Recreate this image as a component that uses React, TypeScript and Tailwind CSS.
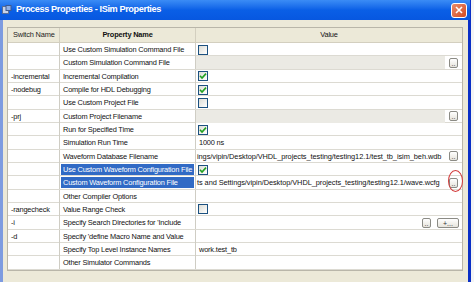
import React from "react";

type Row = {
  sw: string;
  name: string;
  kind: "check" | "checked" | "file" | "text" | "empty" | "path" | "dirs";
  value?: string;
  hl?: boolean;
  circle?: boolean;
};

const ROWS: Row[] = [
  { sw: "", name: "Use Custom Simulation Command File", kind: "check" },
  { sw: "", name: "Custom Simulation Command File", kind: "file" },
  { sw: "-incremental", name: "Incremental Compilation", kind: "checked" },
  { sw: "-nodebug", name: "Compile for HDL Debugging", kind: "checked" },
  { sw: "", name: "Use Custom Project File", kind: "check" },
  { sw: "-prj", name: "Custom Project Filename", kind: "file" },
  { sw: "", name: "Run for Specified Time", kind: "checked" },
  { sw: "", name: "Simulation Run Time", kind: "text", value: "1000 ns" },
  {
    sw: "",
    name: "Waveform Database Filename",
    kind: "path",
    value: "ings/vipin/Desktop/VHDL_projects_testing/testing12.1/test_tb_isim_beh.wdb",
  },
  { sw: "", name: "Use Custom Waveform Configuration File", kind: "checked", hl: true },
  {
    sw: "",
    name: "Custom Waveform Configuration File",
    kind: "path",
    value: "ts and Settings/vipin/Desktop/VHDL_projects_testing/testing12.1/wave.wcfg",
    hl: true,
    circle: true,
  },
  { sw: "", name: "Other Compiler Options", kind: "empty" },
  { sw: "-rangecheck", name: "Value Range Check", kind: "check" },
  { sw: "-i", name: "Specify Search Directories for 'Include", kind: "dirs" },
  { sw: "-d", name: "Specify 'define Macro Name and Value", kind: "empty" },
  { sw: "", name: "Specify Top Level Instance Names", kind: "text", value: "work.test_tb" },
  { sw: "", name: "Other Simulator Commands", kind: "empty" },
];

function Checkbox({ checked }: { checked: boolean }) {
  return (
    <div className="w-[10px] h-[10px] border border-[#1c5180] bg-gradient-to-br from-[#dcdcd5] to-white flex items-center justify-center">
      {checked && (
        <svg width="8" height="8" viewBox="0 0 8 8">
          <path d="M1 3.8 L3 6 L7 1.6" stroke="#21a121" strokeWidth="1.6" fill="none" />
        </svg>
      )}
    </div>
  );
}

function DotsButton({ label = "..", wide = false }: { label?: string; wide?: boolean }) {
  return (
    <div
      className={`h-[10px] ${wide ? "w-[22px]" : "w-[9px]"} border border-[#8b8b85] rounded-[2px] bg-gradient-to-b from-white to-[#e6e4dc] flex items-end justify-center text-[7px] leading-[7px] tracking-normal text-[#333]`}
    >
      {label}
    </div>
  );
}

function ValueCell({ row }: { row: Row }) {
  switch (row.kind) {
    case "check":
    case "checked":
      return (
        <div className="h-full flex items-center pl-[2px]">
          <Checkbox checked={row.kind === "checked"} />
        </div>
      );
    case "file":
      return (
        <div className="h-full flex">
          <div className="flex-1 bg-[#ebeae4]" />
          <div className="w-[17px] flex items-center justify-center">
            <DotsButton />
          </div>
        </div>
      );
    case "text":
      return <div className="h-full flex items-center pl-[3px]">{row.value}</div>;
    case "path":
      return (
        <div className="h-full flex relative">
          <div className="flex-1 min-w-0 flex overflow-hidden whitespace-nowrap items-center pl-[1px] tracking-[-0.07px]">
            {row.value}
          </div>
          <div className="w-[17px] shrink-0 flex items-center justify-center">
            <DotsButton />
          </div>
          {row.circle && (
            <div className="absolute right-[-1px] top-[-6px] w-[15px] h-[22px] rounded-[50%] border border-[#d23a3a]" />
          )}
        </div>
      );
    case "dirs":
      return (
        <div className="h-full flex items-center justify-end gap-[6px] pr-[3px]">
          <DotsButton />
          <DotsButton label="+..." wide />
        </div>
      );
    default:
      return null;
  }
}

export default function App() {
  return (
    <div
      className="w-[474px] h-[282px] bg-white overflow-hidden flex"
      style={{ fontFamily: "'Liberation Sans', Arial, sans-serif" }}
    >
      <div className="w-[471px] h-full flex flex-col border-l-[3px] border-r-[3px] border-l-[#7d9be0] border-r-[#0a2fc6]">
        {/* Title bar */}
        <div className="h-[20px] shrink-0 bg-gradient-to-b from-[#3b8cf5] via-[#0a5fe6] to-[#0757e0] flex items-center -ml-[3px] -mr-[2px] pl-[2px] pr-[3px]">
          <svg width="10" height="10" viewBox="0 0 10 10" className="shrink-0">
            <rect x="0.5" y="1.5" width="6" height="7" fill="#c8d4ea" stroke="#5a6f98" />
            <rect x="4" y="0.5" width="5" height="5" fill="#8fb0e8" stroke="#3e5a90" />
          </svg>
          <span className="ml-[4px] text-white font-bold text-[9.2px] tracking-[-0.4px]">
            Process Properties - ISim Properties
          </span>
          <div className="ml-auto w-[16px] h-[15px] rounded-[3px] border border-white bg-gradient-to-br from-[#e98a6a] to-[#d24b1d] flex items-center justify-center">
            <svg width="8" height="8" viewBox="0 0 8 8">
              <path d="M1 1 L7 7 M7 1 L1 7" stroke="white" strokeWidth="1.6" />
            </svg>
          </div>
        </div>

        {/* Body */}
        <div className="flex-1 bg-[#ece9d8] pt-[7px] pl-[4px] pr-[4px]">
          <div className="w-[456px] border border-[#b9b6a9] bg-white text-[7.4px] tracking-[-0.18px] text-[#111]">
            {/* Header */}
            <div className="grid grid-cols-[52px_136px_minmax(0,1fr)] h-[15px] bg-[#ece9d8] border-b border-[#d3cfbf] whitespace-nowrap">
              <div className="flex items-center pl-[5px] border-r border-[#d3cfbf] text-[#222]">Switch Name</div>
              <div className="flex items-center justify-center border-r border-[#d3cfbf] font-bold">Property Name</div>
              <div className="flex items-center justify-center">Value</div>
            </div>
            {ROWS.map((row, i) => (
              <div
                key={i}
                className="grid grid-cols-[52px_136px_minmax(0,1fr)] h-[13.33px] border-b border-[#dcdad2]"
              >
                <div className="flex items-center pl-[3px] border-r border-[#cfcdc4] whitespace-nowrap">{row.sw}</div>
                <div className="border-r border-[#cfcdc4] px-[1px] py-[1px] min-w-0">
                  <div
                    className={`h-full flex items-center pl-[2px] whitespace-nowrap overflow-hidden ${row.hl ? "bg-[#316ac5] text-white" : ""}`}
                  >
                    {row.name}
                  </div>
                </div>
                <div className="min-w-0">
                  <ValueCell row={row} />
                </div>
              </div>
            ))}
          </div>
        </div>
      </div>
      <div className="flex-1 bg-[#f4f4f4]" />
    </div>
  );
}
